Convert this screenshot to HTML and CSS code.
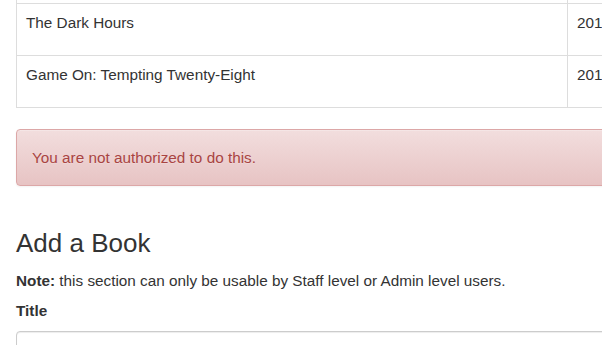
FILE: index.html
```html
<!DOCTYPE html>
<html lang="en">
<head>
<meta charset="utf-8">
<title>Books</title>
<link rel="stylesheet" href="styles.css">
</head>
<body>
<div class="container">
  <table class="books">
    <tbody>
      <tr>
        <td class="title">Dark Notes</td>
        <td class="year">2013</td>
        <td class="actions"><span class="btn-space"></span></td>
      </tr>
      <tr>
        <td class="title">The Dark Hours</td>
        <td class="year">2016</td>
        <td class="actions"><span class="btn-space"></span></td>
      </tr>
      <tr>
        <td class="title">Game On: Tempting Twenty-Eight</td>
        <td class="year">2017</td>
        <td class="actions"><span class="btn-space"></span></td>
      </tr>
    </tbody>
  </table>

  <div class="alert">You are not authorized to do this.</div>

  <h2 class="section-title">Add a Book</h2>
  <p class="note"><strong>Note:</strong> this section can only be usable by Staff level or Admin level users.</p>
  <form class="book-form">
    <div class="form-group">
      <label class="label" for="title">Title</label>
      <input class="input" id="title" type="text">
    </div>
  </form>
</div>
</body>
</html>
```

FILE: styles.css
```css
html, body {
  margin: 0;
  padding: 0;
  overflow: hidden;
  background: #fff;
}

body {
  font-family: "Liberation Sans", Arial, sans-serif;
  font-size: 15.3px;
  line-height: 21.4px;
  color: #333;
}

.container {
  width: 1140px;
  padding-left: 16px;
  margin-top: -49px;
}

.books {
  width: 100%;
  border-collapse: collapse;
  border: 1px solid #ddd;
  margin-bottom: 21px;
}

.books td {
  border: 1px solid #ddd;
  padding: 8px 9px;
  vertical-align: top;
}

.books .title {
  width: 532px;
}

.books .year {
  width: 120px;
}

.btn-space {
  display: block;
  height: 35px;
}

.alert {
  padding: 17px 15px 17px;
  border: 1px solid #dca7a7;
  border-radius: 4px;
  color: #a94442;
  background-image: linear-gradient(to bottom, #f2dede 0, #e7c3c3 100%);
  box-shadow: inset 0 1px 0 rgba(255, 255, 255, .25), 0 1px 2px rgba(0, 0, 0, .05);
  text-shadow: 0 1px 0 rgba(255, 255, 255, .2);
  margin-bottom: 43px;
}

.section-title {
  font-size: 26px;
  font-weight: 500;
  line-height: 1.1;
  margin: 0 0 12px;
  color: #333;
}

.note {
  margin: 0 0 9px;
}

.label {
  display: inline-block;
  font-weight: bold;
  margin-bottom: 9px;
}

.input {
  display: block;
  box-sizing: border-box;
  width: 100%;
  height: 34px;
  padding: 6px 12px;
  border: 1px solid #ccc;
  border-radius: 4px;
  box-shadow: inset 0 1px 1px rgba(0, 0, 0, .075);
  font: inherit;
  margin: 0;
}
```
